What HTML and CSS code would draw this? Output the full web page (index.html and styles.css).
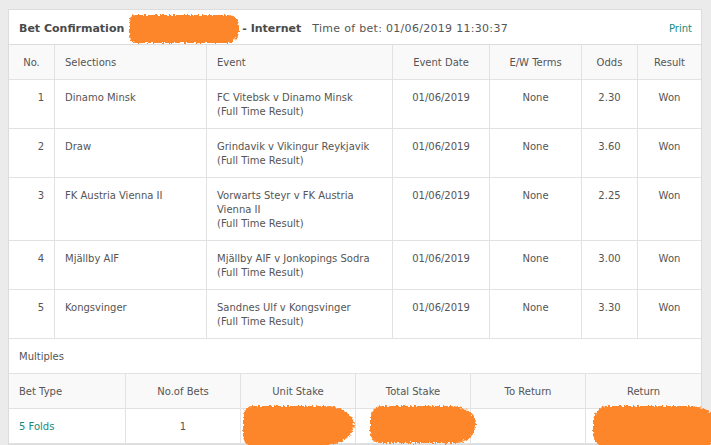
FILE: index.html
```html
<!DOCTYPE html>
<html lang="en">
<head>
<meta charset="utf-8">
<title>Bet Confirmation</title>
<link rel="stylesheet" href="styles.css">
</head>
<body>
<svg class="defs" width="0" height="0" aria-hidden="true">
  <filter id="rough" x="-10%" y="-20%" width="120%" height="140%">
    <feTurbulence type="fractalNoise" baseFrequency="0.45" numOctaves="2" seed="4" result="n"/>
    <feDisplacementMap in="SourceGraphic" in2="n" scale="5" xChannelSelector="R" yChannelSelector="G"/>
  </filter>
</svg>
<div class="panel">
  <div class="bet-header">
    <div class="title">
      <span class="title-main">Bet Confirmation</span>
      <span class="redacted redacted-name"></span>
      <span class="title-channel">- Internet</span>
      <span class="bet-time">Time of bet: 01/06/2019 11:30:37</span>
    </div>
    <a class="print">Print</a>
  </div>

  <div class="sel-table">
    <div class="row head">
      <div class="cell center">No.</div>
      <div class="cell">Selections</div>
      <div class="cell">Event</div>
      <div class="cell center">Event Date</div>
      <div class="cell center">E/W Terms</div>
      <div class="cell center">Odds</div>
      <div class="cell center">Result</div>
    </div>
    <div class="row">
      <div class="cell right">1</div>
      <div class="cell">Dinamo Minsk</div>
      <div class="cell">FC Vitebsk v Dinamo Minsk<span class="market">(Full Time Result)</span></div>
      <div class="cell center">01/06/2019</div>
      <div class="cell center">None</div>
      <div class="cell center">2.30</div>
      <div class="cell center">Won</div>
    </div>
    <div class="row">
      <div class="cell right">2</div>
      <div class="cell">Draw</div>
      <div class="cell">Grindavik v Vikingur Reykjavik<span class="market">(Full Time Result)</span></div>
      <div class="cell center">01/06/2019</div>
      <div class="cell center">None</div>
      <div class="cell center">3.60</div>
      <div class="cell center">Won</div>
    </div>
    <div class="row">
      <div class="cell right">3</div>
      <div class="cell">FK Austria Vienna II</div>
      <div class="cell">Vorwarts Steyr v FK Austria Vienna II<span class="market">(Full Time Result)</span></div>
      <div class="cell center">01/06/2019</div>
      <div class="cell center">None</div>
      <div class="cell center">2.25</div>
      <div class="cell center">Won</div>
    </div>
    <div class="row">
      <div class="cell right">4</div>
      <div class="cell">Mjällby AIF</div>
      <div class="cell">Mjällby AIF v Jonkopings Sodra<span class="market">(Full Time Result)</span></div>
      <div class="cell center">01/06/2019</div>
      <div class="cell center">None</div>
      <div class="cell center">3.00</div>
      <div class="cell center">Won</div>
    </div>
    <div class="row">
      <div class="cell right">5</div>
      <div class="cell">Kongsvinger</div>
      <div class="cell">Sandnes Ulf v Kongsvinger<span class="market">(Full Time Result)</span></div>
      <div class="cell center">01/06/2019</div>
      <div class="cell center">None</div>
      <div class="cell center">3.30</div>
      <div class="cell center">Won</div>
    </div>
  </div>

  <div class="section-label">Multiples</div>

  <div class="multi-table">
    <div class="mrow head">
      <div class="cell">Bet Type</div>
      <div class="cell center">No.of Bets</div>
      <div class="cell center">Unit Stake</div>
      <div class="cell center">Total Stake</div>
      <div class="cell center">To Return</div>
      <div class="cell center">Return</div>
    </div>
    <div class="mrow">
      <div class="cell link">5 Folds</div>
      <div class="cell center">1</div>
      <div class="cell center masked"><span class="redacted blob-unit"></span></div>
      <div class="cell center masked"><span class="redacted blob-total"></span></div>
      <div class="cell center"></div>
      <div class="cell center masked"><span class="redacted blob-return"></span></div>
    </div>
  </div>
</div>
</body>
</html>
```

FILE: styles.css
```css
html, body {
  overflow: hidden;
}
body {
  margin: 0;
  padding: 9px 10px 0 8px;
  background: #ebebeb;
  font-family: "DejaVu Sans", Verdana, sans-serif;
  font-size: 10px;
  color: #555;
}
.defs {
  position: absolute;
  width: 0;
  height: 0;
}
.panel {
  width: 692px;
  background: #fff;
  border: 1px solid #dcdcdc;
}
.bet-header {
  box-sizing: border-box;
  height: 35px;
  padding: 2px 9px 0 10px;
  display: flex;
  align-items: center;
  justify-content: space-between;
  border-bottom: 1px solid #dcdcdc;
}
.title {
  display: flex;
  align-items: center;
  white-space: nowrap;
}
.title-main {
  font-weight: bold;
  font-size: 11px;
  color: #4a4a4a;
}
.title-channel {
  font-weight: bold;
  font-size: 11px;
  color: #4a4a4a;
  margin-left: 3px;
}
.bet-time {
  font-size: 11px;
  letter-spacing: 0.3px;
  margin-left: 11px;
  color: #555;
}
.redacted {
  display: block;
  background: #fe8629;
  filter: url(#rough);
}
.redacted-name {
  display: inline-block;
  width: 110px;
  height: 28px;
  margin: 1px 0 0 5px;
  border-radius: 6px 10px 12px 6px / 8px 10px 12px 10px;
}
.print {
  color: #188a7c;
  font-size: 10px;
}

.row {
  display: grid;
  grid-template-columns: 45px 152px 186px 97px 92px 56px 64px;
  border-bottom: 1px solid #e2e2e2;
}
.mrow {
  display: grid;
  grid-template-columns: 116px 115px 115px 115px 115px 116px;
  border-bottom: 1px solid #e2e2e2;
}
.head {
  background: #f9f9f9;
}
.cell {
  padding: 11px 10px 9px;
  line-height: 14px;
  border-left: 1px solid #e2e2e2;
  min-height: 34px;
  box-sizing: border-box;
}
.cell:first-child {
  border-left: none;
}
.center {
  text-align: center;
}
.right {
  text-align: right;
}
.market {
  display: block;
}
.section-label {
  height: 34px;
  line-height: 36px;
  padding: 0 10px;
  border-bottom: 1px solid #e2e2e2;
}
.link {
  color: #188a7c;
}
.masked {
  position: relative;
}
.blob-unit,
.blob-total,
.blob-return {
  position: absolute;
  top: -3px;
  z-index: 2;
}
.blob-unit {
  left: 2px;
  width: 111px;
  height: 40px;
  border-radius: 10px 30px 34px 8px / 10px 20px 22px 12px;
}
.blob-total {
  left: 14px;
  width: 106px;
  height: 37px;
  border-radius: 12px 26px 22px 10px / 12px 18px 18px 12px;
}
.blob-return {
  left: 7px;
  width: 126px;
  height: 42px;
  border-radius: 14px 30px 20px 14px / 16px 20px 20px 16px;
}
```
